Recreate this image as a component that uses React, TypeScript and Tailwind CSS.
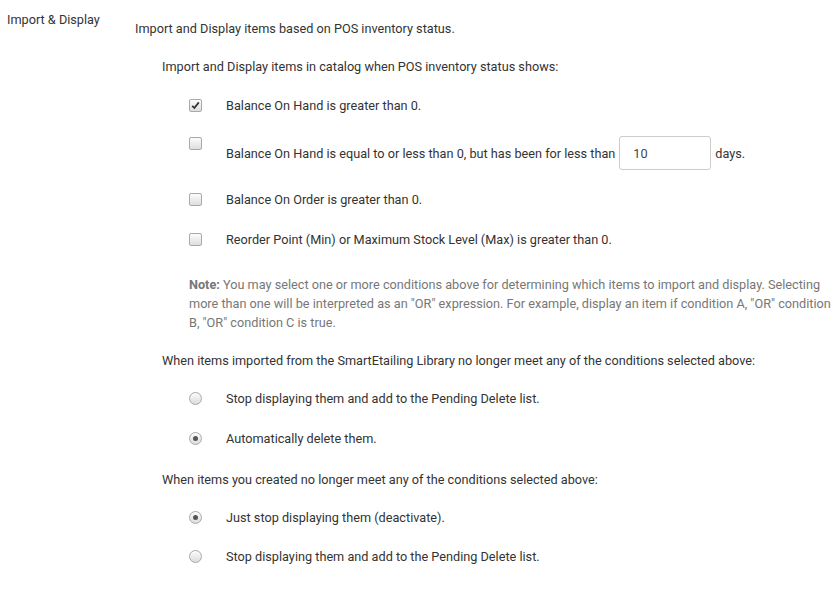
import React from 'react';

// Import & Display settings: POS inventory rules for catalog items.

function Box({ checked }: { checked?: boolean }) {
  return (
    <span className="flex h-[13px] w-[13px] shrink-0 items-center justify-center rounded-[2px] border border-[#a9a9a9] bg-gradient-to-b from-[#fcfcfc] to-[#dedede]">
      {checked ? (
        <svg width="9" height="9" viewBox="0 0 9 9">
          <path d="M1.2 4.8 L3.4 7 L7.8 1.4" fill="none" stroke="#333" strokeWidth="1.8" />
        </svg>
      ) : null}
    </span>
  );
}

function Radio({ checked }: { checked?: boolean }) {
  return (
    <span className="flex h-[13px] w-[13px] shrink-0 items-center justify-center rounded-full border border-[#a9a9a9] bg-gradient-to-b from-[#fcfcfc] to-[#dcdcdc]">
      {checked ? <span className="h-[5px] w-[5px] rounded-full bg-[#555]" /> : null}
    </span>
  );
}

function Row({ control, children }: { control: React.ReactNode; children: React.ReactNode }) {
  return (
    <div className="flex items-center">
      <span className="flex w-[64px] shrink-0 pl-[27px]">{control}</span>
      <span>{children}</span>
    </div>
  );
}

export default function App() {
  return (
    <div className="flex h-[604px] w-[836px] bg-white text-[12.7px] leading-[19px] text-[#333]" style={{ fontFamily: 'Roboto, "Liberation Sans", sans-serif' }}>
      <div className="w-[135px] shrink-0 pl-[7px] pt-[10px]">Import &amp; Display</div>
      <div className="pt-[19px]">
        <p>Import and Display items based on POS inventory status.</p>
        <div className="pl-[27px]">
          <p className="mt-[19px]">Import and Display items in catalog when POS inventory status shows:</p>
          <div className="mt-[20px] flex flex-col">
            <Row control={<Box checked />}>Balance On Hand is greater than 0.</Row>
            <div className="mt-[21px] flex items-start">
              <span className="flex w-[64px] shrink-0 pl-[27px] pt-[1px]">
                <Box />
              </span>
              <span className="flex items-center">
                Balance On Hand is equal to or less than 0, but has been for less than
                <span className="ml-[4px] flex h-[34px] w-[92px] items-center rounded-[3px] border border-[#ccc] px-[13px] text-[#444]">10</span>
                <span className="ml-[4px]">days.</span>
              </span>
            </div>
            <div className="mt-[20px]">
              <Row control={<Box />}>Balance On Order is greater than 0.</Row>
            </div>
            <div className="mt-[21px]">
              <Row control={<Box />}>Reorder Point (Min) or Maximum Stock Level (Max) is greater than 0.</Row>
            </div>
          </div>
          <p className="mt-[26px] pl-[27px] text-[#777]">
            <b className="font-bold">Note:</b> You may select one or more conditions above for determining which items to import and display. Selecting more than one will be interpreted as an "OR" expression. For example, display an item if condition A, "OR" condition B, "OR" condition C is true.
          </p>
          <p className="mt-[19px]">When items imported from the SmartEtailing Library no longer meet any of the conditions selected above:</p>
          <div className="mt-[19px] flex flex-col gap-[21px]">
            <Row control={<Radio />}>Stop displaying them and add to the Pending Delete list.</Row>
            <Row control={<Radio checked />}>Automatically delete them.</Row>
          </div>
          <p className="mt-[22px]">When items you created no longer meet any of the conditions selected above:</p>
          <div className="mt-[19px] flex flex-col gap-[20px]">
            <Row control={<Radio checked />}>Just stop displaying them (deactivate).</Row>
            <Row control={<Radio />}>Stop displaying them and add to the Pending Delete list.</Row>
          </div>
        </div>
      </div>
    </div>
  );
}
